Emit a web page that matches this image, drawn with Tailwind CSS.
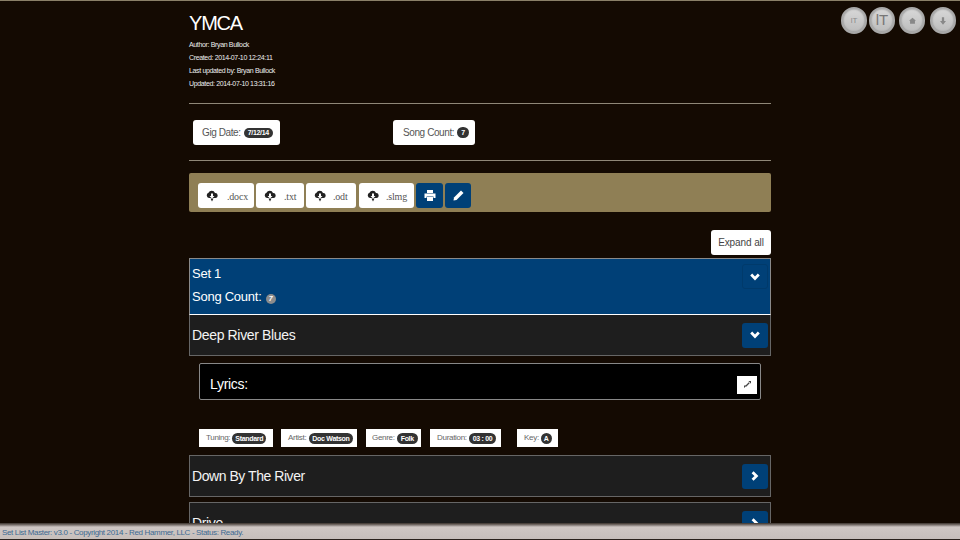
<!DOCTYPE html>
<html lang="en">
<head>
<meta charset="UTF-8">
<title>YMCA</title>
<script src="https://cdn.jsdelivr.net/npm/@tailwindcss/browser@4"></script>
</head>
<body class="bg-[#140a02] h-[540px] overflow-hidden font-['Liberation_Sans',Arial,sans-serif] text-white relative">
<div class="h-px bg-[#8a8068]"></div>

<!-- round tool buttons -->
<div class="absolute top-[7px] right-[4px] flex">
  <div class="w-[26px] h-[27px] rounded-full bg-gradient-to-b from-[#d8d8d8] to-[#bcbcbc] border-2 border-[#a8a8a8] shadow-[inset_0_0_2px_#777] flex items-center justify-center text-[8px] text-[#8a8a8a] mr-[2px]">lT</div>
  <div class="w-[26px] h-[27px] rounded-full bg-gradient-to-b from-[#d8d8d8] to-[#bcbcbc] border-2 border-[#a8a8a8] shadow-[inset_0_0_2px_#777] flex items-center justify-center text-[15px] text-[#777] mr-[4px]">lT</div>
  <div class="w-[26px] h-[27px] rounded-full bg-gradient-to-b from-[#d8d8d8] to-[#bcbcbc] border-2 border-[#a8a8a8] shadow-[inset_0_0_2px_#777] flex items-center justify-center mr-[5px]">
    <svg width="7" height="7" viewBox="0 0 10 10"><path d="M5 1 L10 5.5 H8.5 V9.5 H1.5 V5.5 H0 Z" fill="#888"/></svg>
  </div>
  <div class="w-[26px] h-[27px] rounded-full bg-gradient-to-b from-[#d8d8d8] to-[#bcbcbc] border-2 border-[#a8a8a8] shadow-[inset_0_0_2px_#777] flex items-center justify-center">
    <svg width="6" height="8" viewBox="0 0 8 10"><path d="M2.5 0 H5.5 V5 H8 L4 10 L0 5 H2.5 Z" fill="#888"/></svg>
  </div>
</div>

<main class="w-[582px] ml-[189px]">
  <h1 class="text-[20px] leading-[24px] mt-[10px] tracking-[-1.2px]">YMCA</h1>
  <div class="mt-[3px] text-[7px] leading-[13px] text-[#eeeeee] tracking-[-0.35px]">
    <p>Author: Bryan Bullock</p>
    <p>Created: 2014-07-10 12:24:11</p>
    <p>Last updated by: Bryan Bullock</p>
    <p>Updated: 2014-07-10 13:31:16</p>
  </div>
  <div class="h-px bg-[#8f8778] mt-[13px]"></div>

  <div class="flex mt-[16px] ml-[4px] text-[#555] text-[10px] tracking-[-0.4px]">
    <div class="w-[87px] h-[25px] bg-white rounded-[3px] flex items-center pl-[9px]">Gig Date:<span class="ml-[3px] bg-[#333] text-white text-[7px] font-bold rounded-full px-[4px] leading-[10px] tracking-[-0.3px]">7/12/14</span></div>
    <div class="w-[82px] h-[25px] bg-white rounded-[3px] flex items-center pl-[10px] ml-[113px]">Song Count:<span class="ml-[3px] bg-[#333] text-white text-[7px] font-bold rounded-full px-[4px] leading-[11px]">7</span></div>
  </div>
  <div class="h-px bg-[#8f8778] mt-[15px]"></div>

  <div class="mt-[12px] h-[39px] bg-[#8f7f55] rounded-[2px] flex items-center pl-[9px] pt-[5px] font-['Liberation_Serif',serif] text-[10px] text-[#555] tracking-[-0.2px]">
    <div class="w-[56px] h-[25px] bg-white rounded-[3px] flex items-center pl-[8px] pt-[2px]">
      <svg width="12" height="12" viewBox="0 0 12 12"><path d="M3 8 A2.7 2.7 0 0 1 2.5 2.8 A3.5 3.5 0 0 1 9 3 A2.5 2.5 0 0 1 9.3 8 Z" fill="#222"/><path d="M5 3.5 H7 V6 H8.5 L6 8.5 L3.5 6 H5 Z" fill="#fff"/><path d="M4.5 8.5 H7.5 L6 11.5 Z" fill="#222"/></svg>
      <span class="ml-[9px]">.docx</span>
    </div>
    <div class="w-[48px] h-[25px] bg-white rounded-[3px] flex items-center pl-[8px] pt-[2px] ml-[2px]">
      <svg width="12" height="12" viewBox="0 0 12 12"><path d="M3 8 A2.7 2.7 0 0 1 2.5 2.8 A3.5 3.5 0 0 1 9 3 A2.5 2.5 0 0 1 9.3 8 Z" fill="#222"/><path d="M5 3.5 H7 V6 H8.5 L6 8.5 L3.5 6 H5 Z" fill="#fff"/><path d="M4.5 8.5 H7.5 L6 11.5 Z" fill="#222"/></svg>
      <span class="ml-[8px]">.txt</span>
    </div>
    <div class="w-[50px] h-[25px] bg-white rounded-[3px] flex items-center pl-[8px] pt-[2px] ml-[2px]">
      <svg width="12" height="12" viewBox="0 0 12 12"><path d="M3 8 A2.7 2.7 0 0 1 2.5 2.8 A3.5 3.5 0 0 1 9 3 A2.5 2.5 0 0 1 9.3 8 Z" fill="#222"/><path d="M5 3.5 H7 V6 H8.5 L6 8.5 L3.5 6 H5 Z" fill="#fff"/><path d="M4.5 8.5 H7.5 L6 11.5 Z" fill="#222"/></svg>
      <span class="ml-[7px]">.odt</span>
    </div>
    <div class="w-[55px] h-[25px] bg-white rounded-[3px] flex items-center pl-[8px] pt-[2px] ml-[3px]">
      <svg width="12" height="12" viewBox="0 0 12 12"><path d="M3 8 A2.7 2.7 0 0 1 2.5 2.8 A3.5 3.5 0 0 1 9 3 A2.5 2.5 0 0 1 9.3 8 Z" fill="#222"/><path d="M5 3.5 H7 V6 H8.5 L6 8.5 L3.5 6 H5 Z" fill="#fff"/><path d="M4.5 8.5 H7.5 L6 11.5 Z" fill="#222"/></svg>
      <span class="ml-[7px]">.slmg</span>
    </div>
    <div class="w-[27px] h-[25px] bg-[#004077] rounded-[3px] flex items-center justify-center ml-[2px]">
      <svg width="12" height="11" viewBox="0 0 12 11"><path d="M3 0 H9 V3 H3 Z M0.5 3.5 H11.5 V8 H9.5 V6.5 H2.5 V8 H0.5 Z M3 7 H9 V11 H3 Z" fill="#fff"/></svg>
    </div>
    <div class="w-[26px] h-[25px] bg-[#004077] rounded-[3px] flex items-center justify-center ml-[2px]">
      <svg width="11" height="11" viewBox="0 0 11 11"><path d="M8 0.5 L10.5 3 L3.5 10 L0.5 10.5 L1 7.5 Z" fill="#fff"/></svg>
    </div>
  </div>

  <div class="flex justify-end mt-[18px]">
    <div class="w-[60px] h-[25px] bg-white rounded-[3px] flex items-center justify-center text-[10px] text-[#444] tracking-[-0.1px]">Expand all</div>
  </div>

  <section class="mt-[3px] h-[57px] bg-[#004077] border border-[#8a8a8a] border-b-white pl-[2px] relative text-[13px] tracking-[-0.25px]">
    <p class="mt-[7px] leading-[16px]">Set 1</p>
    <p class="mt-[7px] leading-[16px] flex items-center">Song Count:<span class="ml-[4px] w-[10px] h-[10px] mt-[3px] rounded-full bg-[#8c8c8c] text-[7px] font-bold italic flex items-center justify-center">7</span></p>
    <div class="absolute top-[5px] right-[2px] w-[26px] h-[25px] rounded-[3px] border border-[#003a6b] flex items-center justify-center">
      <svg width="10" height="8" viewBox="0 0 10 8"><path d="M1.2 1.6 L5 5.4 L8.8 1.6" fill="none" stroke="#fff" stroke-width="2.8"/></svg>
    </div>
  </section>

  <section class="h-[41px] bg-[#1e1e1e] border border-[#666] border-t-0 flex items-center justify-between px-[2px] text-[14px]">
    <span class="text-[#f4f4f4] tracking-[-0.35px]">Deep River Blues</span>
    <div class="w-[26px] h-[25px] rounded-[3px] bg-[#004077] flex items-center justify-center">
      <svg width="10" height="8" viewBox="0 0 10 8"><path d="M1.2 1.6 L5 5.4 L8.8 1.6" fill="none" stroke="#fff" stroke-width="2.8"/></svg>
    </div>
  </section>

  <div class="mt-[7px] mx-[10px] h-[37px] bg-black border border-[#888] rounded-[2px] flex items-center justify-between pl-[10px] pr-[3px] pt-[6px] text-[14px]">
    <span class="tracking-[-0.3px]">Lyrics:</span>
    <div class="w-[20px] h-[18px] bg-white flex items-center justify-center">
      <svg width="7" height="7" viewBox="0 0 8 8"><path d="M5 0 H8 V3 Z M0 8 V5 H3 Z" fill="#444"/><path d="M2 6 L6 2" stroke="#444" stroke-width="1.4"/></svg>
    </div>
  </div>

  <div class="flex mt-[29px] ml-[10px] text-[8px] text-[#666] tracking-[-0.3px] whitespace-nowrap">
    <div class="w-[74px] h-[18px] bg-white flex items-center pl-[7px]">Tuning:<span class="ml-[2px] bg-[#333] text-white font-bold text-[7px] rounded-full px-[3px] leading-[11px]">Standard</span></div>
    <div class="w-[76px] h-[18px] bg-white flex items-center pl-[7px] ml-[8px]">Artist:<span class="ml-[3px] bg-[#333] text-white font-bold text-[7px] rounded-full px-[3px] leading-[11px]">Doc Watson</span></div>
    <div class="w-[55px] h-[18px] bg-white flex items-center pl-[6px] ml-[9px]">Genre:<span class="ml-[2px] bg-[#333] text-white font-bold text-[7px] rounded-full px-[4px] leading-[11px]">Folk</span></div>
    <div class="w-[71px] h-[18px] bg-white flex items-center pl-[7px] ml-[9px]">Duration:<span class="ml-[2px] bg-[#333] text-white font-bold text-[7px] rounded-full px-[4px] leading-[11px]">03 : 00</span></div>
    <div class="w-[41px] h-[18px] bg-white flex items-center pl-[7px] ml-[16px]">Key:<span class="ml-[2px] bg-[#333] text-white font-bold text-[7px] rounded-full px-[3px] leading-[11px]">A</span></div>
  </div>

  <section class="mt-[8px] h-[42px] bg-[#1e1e1e] border border-[#666] flex items-center justify-between px-[2px] text-[14px]">
    <span class="text-[#f4f4f4] tracking-[-0.45px]">Down By The River</span>
    <div class="w-[26px] h-[25px] rounded-[3px] bg-[#004077] flex items-center justify-center">
      <svg width="8" height="10" viewBox="0 0 8 10"><path d="M1.6 1.2 L5.4 5 L1.6 8.8" fill="none" stroke="#fff" stroke-width="2.8"/></svg>
    </div>
  </section>

  <section class="mt-[5px] h-[42px] bg-[#1e1e1e] border border-[#666] flex items-center justify-between px-[2px] text-[14px]">
    <span class="text-[#f4f4f4] tracking-[-0.35px]">Drive</span>
    <div class="w-[26px] h-[25px] rounded-[3px] bg-[#004077] flex items-center justify-center">
      <svg width="8" height="10" viewBox="0 0 8 10"><path d="M1.6 1.2 L5.4 5 L1.6 8.8" fill="none" stroke="#fff" stroke-width="2.8"/></svg>
    </div>
  </section>
</main>

<footer class="absolute left-0 right-0 bottom-0 h-[17px] bg-gradient-to-b from-[#3a322c] via-[#cfc7c4] to-[#c6bebb] via-[25%] border-b border-[#2a211c] flex items-end pl-[2px] pb-[1px] text-[8px] leading-[10px] text-[#3d6a92] tracking-[-0.35px]">
  Set List Master: v3.0 - Copyright 2014 - Red Hammer, LLC - Status: Ready.
</footer>
</body>
</html>
